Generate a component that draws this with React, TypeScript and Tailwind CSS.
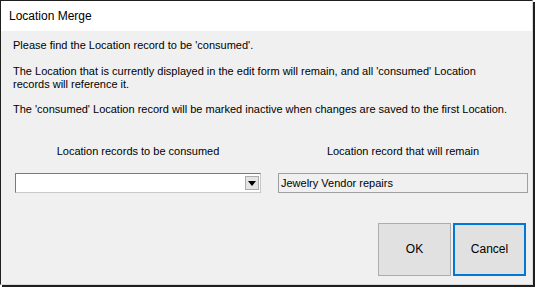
import React from 'react';

const App: React.FC = () => {
  return (
    <div className="w-[536px] h-[287px] bg-white font-['Liberation_Sans',Arial,sans-serif] text-black">
      <div className="w-[533px] h-[285px] flex flex-col border border-[#1f1f1f] border-r-[#d9d9d9] border-b-[#d9d9d9] shadow-[2px_2px_0_0_#1f1f1f] bg-[#f0f0f0]">
        {/* title bar */}
        <div className="h-[30px] bg-white flex items-center pl-[8px] text-[12px] shrink-0">
          Location Merge
        </div>

        <div className="flex flex-col flex-1 pt-[8px] pl-[12px] pr-[4px] text-[11px] leading-[13px]">
          <p>Please find the Location record to be 'consumed'.</p>
          <p className="mt-[13px]">
            The Location that is currently displayed in the edit form will remain, and all 'consumed' Location
            <br />
            records will reference it.
          </p>
          <p className="mt-[12px]">
            The 'consumed' Location record will be marked inactive when changes are saved to the first Location.
          </p>

          <div className="flex mt-[29px] ml-[2px]">
            <div className="w-[246px] flex flex-col items-center">
              <span>Location records to be consumed</span>
              <div className="mt-[15px] w-full h-[20px] bg-white border border-[#7a7a7a] border-r-[#c8c8c8] border-b-[#c8c8c8] flex items-center justify-end pr-[1px]">
                <div className="w-[14px] h-[14px] bg-[#e5e5e5] border border-[#acacac] flex items-center justify-center">
                  <svg width="8" height="5" viewBox="0 0 8 5">
                    <path d="M0 0 H8 L4 5 Z" fill="#000" />
                  </svg>
                </div>
              </div>
            </div>
            <div className="ml-[17px] flex-1 flex flex-col items-center">
              <span>Location record that will remain</span>
              <div className="mt-[15px] w-full h-[20px] border border-[#a0a0a0] bg-[#f0f0f0] flex items-center pl-[2px]">
                Jewelry Vendor repairs
              </div>
            </div>
          </div>

          <div className="flex justify-end gap-[2px] mt-[30px] pr-[2px]">
            <button className="w-[73px] h-[53px] bg-[#e1e1e1] border border-[#adadad] text-[12px]">OK</button>
            <button className="w-[73px] h-[53px] bg-[#e1e1e1] border-2 border-[#0078d7] text-[12px]">Cancel</button>
          </div>
        </div>
      </div>
    </div>
  );
};

export default App;
